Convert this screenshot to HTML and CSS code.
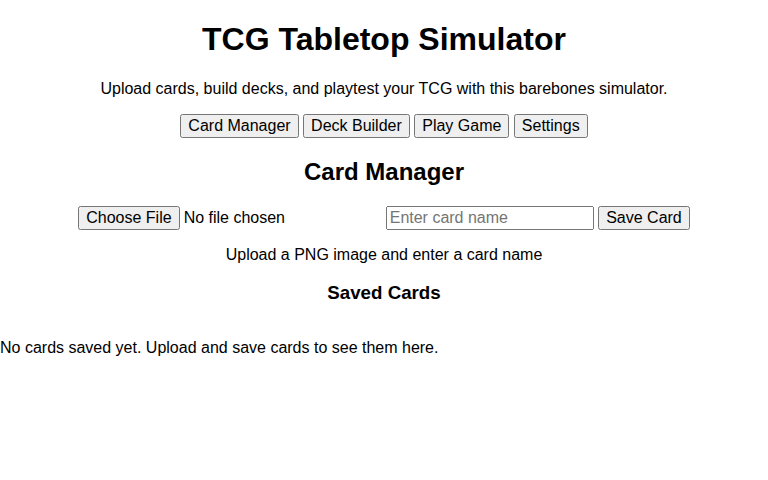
FILE: index.html
```html
<!DOCTYPE html>
<html lang="en">
<head>
<meta charset="utf-8">
<title>TCG Tabletop Simulator</title>
<link rel="stylesheet" href="styles.css">
</head>
<body>
<h1 class="title">TCG Tabletop Simulator</h1>
<p class="intro">Upload cards, build decks, and playtest your TCG with this barebones simulator.</p>
<div class="nav">
  <button class="btn">Card Manager</button>
  <button class="btn">Deck Builder</button>
  <button class="btn">Play Game</button>
  <button class="btn">Settings</button>
</div>
<h2 class="section-title">Card Manager</h2>
<div class="upload-row">
  <input type="file" class="file-input" accept="image/png">
  <input type="text" class="name-input" placeholder="Enter card name">
  <button class="btn">Save Card</button>
</div>
<p class="hint">Upload a PNG image and enter a card name</p>
<h3 class="sub-title">Saved Cards</h3>
<div class="card-grid">
  <p class="empty">No cards saved yet. Upload and save cards to see them here.</p>
</div>
</body>
</html>
```

FILE: styles.css
```css
body {
  margin: 0;
  font-family: "Liberation Sans", Arial, sans-serif;
  font-size: 16px;
  color: #000;
  background: #fff;
  text-align: center;
}
.btn,
.file-input,
.name-input {
  font-family: "Liberation Sans", Arial, sans-serif;
  font-size: 16px;
}
.name-input {
  box-sizing: border-box;
  width: 208px;
}
.card-grid {
  display: grid;
  text-align: left;
}
```
